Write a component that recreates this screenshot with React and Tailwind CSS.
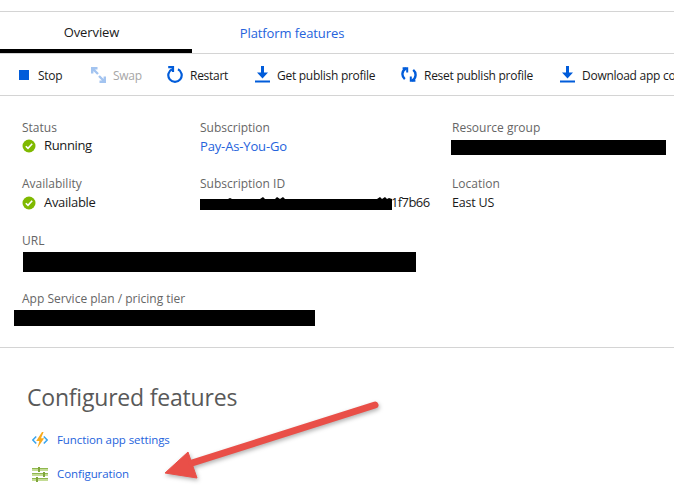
import clsx from 'clsx'

const font = { fontFamily: '"Open Sans", "Noto Sans", sans-serif' }

function StopIcon() {
  return <span className="block w-[10px] h-[10px] bg-[#015cda]" />
}

function SwapIcon() {
  return (
    <svg width="15" height="16" viewBox="0 0 15 16" fill="none" stroke="#a3c4f0" strokeWidth="2.4">
      <path d="M7 7 1.5 1.5M1.2 6.5V1.2h5.3" />
      <path d="M8 9l5.5 5.5M13.8 9.5v5.3H8.5" />
    </svg>
  )
}

function RestartIcon() {
  return (
    <svg width="16" height="17" viewBox="0 0 16 17" fill="none" stroke="#015cda" strokeWidth="2.2">
      <path d="M5 3.2A6.7 6.7 0 1 0 11 3.2" />
      <path d="M1.2 1.2 6 1.2 6 6" />
    </svg>
  )
}

function DownloadIcon() {
  return (
    <svg width="15" height="17" viewBox="0 0 15 17" fill="#015cda">
      <path d="M6 0h3v6.5h4L7.5 12.5 2 6.5h4z" />
      <rect x="0" y="14.5" width="15" height="2" />
    </svg>
  )
}

function ResetIcon() {
  return (
    <svg width="16" height="17" viewBox="0 0 16 17" fill="none" stroke="#015cda" strokeWidth="2.4">
      <path d="M3.8 13.2A6.5 6.5 0 0 1 5 2.4" />
      <path d="M12.2 3.8A6.5 6.5 0 0 1 11 14.6" />
      <path d="M1.6 2.2h4.6v4.4" strokeWidth="2" />
      <path d="M14.4 14.8H9.8v-4.4" strokeWidth="2" />
    </svg>
  )
}

function CheckIcon() {
  return (
    <svg width="14" height="14" viewBox="0 0 14 14" className="shrink-0">
      <circle cx="7" cy="7" r="6.5" fill="#7fb900" />
      <path d="M3.8 7.2 6 9.4l4.2-4.6" fill="none" stroke="#fff" strokeWidth="1.6" />
    </svg>
  )
}

function FunctionIcon() {
  return (
    <svg width="16" height="16" viewBox="0 0 16 16">
      <path d="M4.2 4.5.8 8l3.4 3.5" fill="none" stroke="#3aa5ee" strokeWidth="1.6" />
      <path d="M11.8 4.5 15.2 8l-3.4 3.5" fill="none" stroke="#3aa5ee" strokeWidth="1.6" />
      <path d="M10 0 4.2 9h3.2L5.4 16l6.8-9.8H9L11.6 0z" fill="#f8ab1e" />
    </svg>
  )
}

function ConfigIcon() {
  return (
    <svg width="16" height="15" viewBox="0 0 16 15">
      <rect x="0" y="1" width="16" height="3" fill="#c4dc95" />
      <rect x="0" y="6" width="16" height="3" fill="#c4dc95" />
      <rect x="0" y="11" width="16" height="3" fill="#c4dc95" />
      <rect x="0" y="1" width="16" height="1" fill="#8fb84e" />
      <rect x="0" y="6" width="16" height="1" fill="#8fb84e" />
      <rect x="0" y="11" width="16" height="1" fill="#8fb84e" />
      <rect x="6" y="0" width="2" height="5" fill="#7fa63a" />
      <rect x="11" y="5" width="2" height="5" fill="#7fa63a" />
      <rect x="4" y="10" width="2" height="5" fill="#7fa63a" />
    </svg>
  )
}

function ToolbarItem({ icon, label, disabled, className, gap = 'gap-[7px]' }) {
  return (
    <div className={clsx('absolute top-0 h-[41px] flex items-center whitespace-nowrap', gap, className)}>
      {icon}
      <span className={clsx('text-[12px] pt-[2px] tracking-[-0.27px]', disabled ? 'text-[#a6a6a6]' : 'text-[#1a1a1a]')}>{label}</span>
    </div>
  )
}

function Label({ children }) {
  return <div className="text-[12px] leading-[16px] text-[#666666]">{children}</div>
}

function Arrow() {
  return (
    <svg width="240" height="100" viewBox="0 0 240 100" className="absolute left-[150px] top-[395px] drop-shadow-[1px_2px_2px_rgba(0,0,0,0.3)]">
      <path d="M15 78 38 57 47 83Z" fill="#e94f48" stroke="#e94f48" strokeLinejoin="round" />
      <path d="M225 10 42 68" stroke="#e94f48" strokeWidth="7" strokeLinecap="round" fill="none" />
    </svg>
  )
}

export default function App() {
  return (
    <div className="relative w-[674px] h-[491px] overflow-hidden bg-white" style={font}>
      <div className="h-[11px]" />
      <div className="border-t border-b border-[#d4d4d4] h-[43px] flex">
        <div className="w-[192px] h-[41px] border-b-4 border-black flex items-center justify-center pr-[9px] pt-[4px] text-[13px] text-[#1a1a1a] tracking-[-0.1px]">
          Overview
        </div>
        <div className="w-[201px] h-[37px] flex items-center justify-center pt-[6px] pr-[1px] text-[13px] text-[#2563dc] tracking-[-0.1px]">
          Platform features
        </div>
      </div>

      <div className="relative h-[42px] border-b border-[#d4d4d4]">
        <ToolbarItem className="left-[19px]" gap="gap-[9px]" icon={<StopIcon />} label="Stop" />
        <ToolbarItem className="left-[91px]" disabled icon={<SwapIcon />} label="Swap" />
        <ToolbarItem className="left-[167px]" icon={<RestartIcon />} label="Restart" />
        <ToolbarItem className="left-[255px]" icon={<DownloadIcon />} label="Get publish profile" />
        <ToolbarItem className="left-[401px]" icon={<ResetIcon />} label="Reset publish profile" />
        <ToolbarItem className="left-[560px]" icon={<DownloadIcon />} label="Download app content" />
      </div>

      <div className="h-[252px] border-b border-[#d4d4d4] pt-[24px]">
        <div className="grid grid-cols-[178px_252px_1fr] grid-rows-[56px_58px] pl-[22px] h-[114px]">
          <div>
            <Label>Status</Label>
            <div className="flex items-center gap-[8px] h-[20px] text-[13px] tracking-[-0.35px] text-[#1a1a1a]">
              <CheckIcon />Running
            </div>
          </div>
          <div>
            <Label>Subscription</Label>
            <div className="h-[20px] leading-[20px] text-[13px] tracking-[-0.15px] text-[#2563dc]">Pay-As-You-Go</div>
          </div>
          <div>
            <Label>Resource group</Label>
            <div className="w-[215px] h-[15px] bg-black mt-[4px] -ml-[1px]" />
          </div>
          <div>
            <Label>Availability</Label>
            <div className="flex items-center gap-[8px] h-[20px] mt-[1px] text-[13px] tracking-[-0.3px] text-[#1a1a1a]">
              <CheckIcon />Available
            </div>
          </div>
          <div>
            <Label>Subscription ID</Label>
            <div className="flex items-center h-[20px] mt-[1px] text-[13px] tracking-[-0.6px] text-[#1a1a1a]">
              <svg width="192" height="13" viewBox="0 0 192 13" className="shrink-0">
                <path d="M0 2h28l2-1 2 1h28l3-2 2 2h10l2-2 3 2 3-2 2 2h92l3-2 2 2 3-2 2 2 2-1 3 1v11H0z" fill="#000" />
              </svg>
              <span className="-ml-[1px]">1f7b66</span>
            </div>
          </div>
          <div>
            <Label>Location</Label>
            <div className="h-[20px] mt-[1px] leading-[20px] text-[12.5px] tracking-[-0.2px] text-[#1a1a1a]">East US</div>
          </div>
        </div>

        <div className="pl-[22px] -mt-[1px]">
          <Label>URL</Label>
          <div className="w-[393px] h-[20px] bg-black mt-[3px] ml-[1px]" />
        </div>
        <div className="mt-[19px]">
          <div className="pl-[22px]"><Label>App Service plan / pricing tier</Label></div>
          <div className="w-[301px] h-[16px] bg-black mt-[3px] ml-[14px]" />
        </div>
      </div>

      <div className="pl-[27px] pt-[33px]">
        <h2 className="text-[23px] leading-[32px] text-[#595959] tracking-[-0.2px]">Configured features</h2>
        <div className="mt-[18px] pl-[5px] flex items-center gap-[9px] h-[18px] text-[11.5px] tracking-[-0.1px] text-[#2563dc]">
          <FunctionIcon />Function app settings
        </div>
        <div className="mt-[16px] pl-[5px] flex items-center gap-[9px] h-[18px] text-[11.5px] tracking-[-0.1px] text-[#2563dc]">
          <ConfigIcon />Configuration
        </div>
      </div>

      <Arrow />
    </div>
  )
}
